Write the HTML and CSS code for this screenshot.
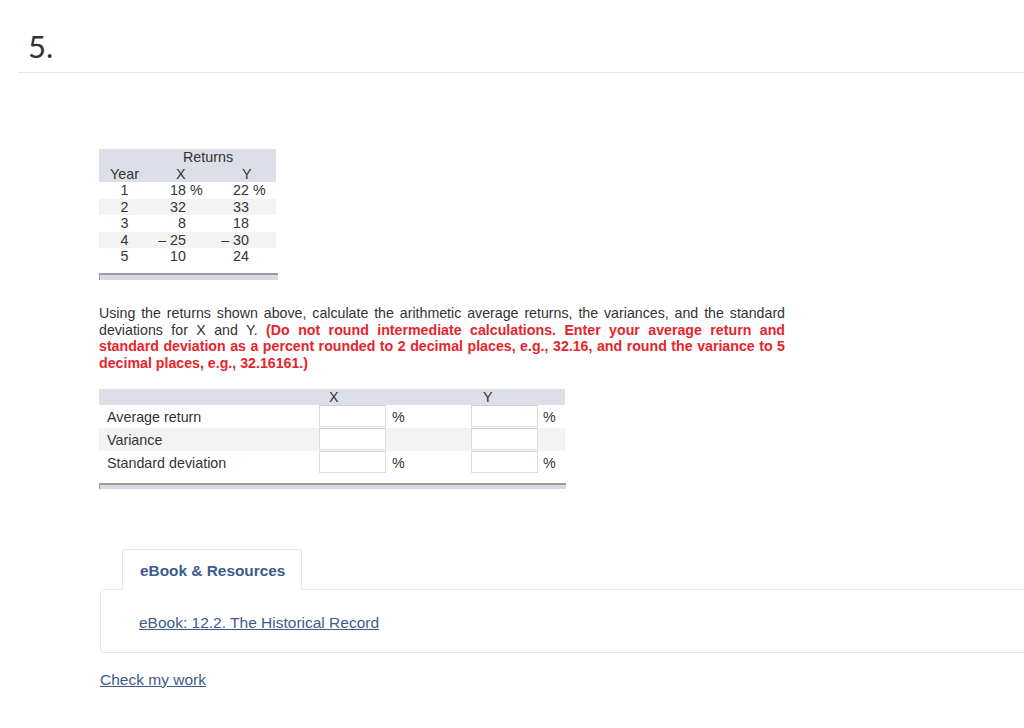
FILE: index.html
```html
<!DOCTYPE html>
<html>
<head>
<meta charset="utf-8">
<link rel="stylesheet" href="styles.css">
</head>
<body>
<header class="qhead"><h1 class="qnum">5.</h1></header>
<main class="content">
  <div class="returns">
    <div class="rrow rhead"><span></span><span class="span-all">Returns</span></div>
    <div class="rrow rhead"><span class="c">Year</span><span class="cx">X</span><span class="cy">Y</span></div>
    <div class="rrow"><span class="c">1</span><span class="n">18</span><span class="p">%</span><span class="n">22</span><span class="p">%</span></div>
    <div class="rrow alt"><span class="c">2</span><span class="n">32</span><span class="p"></span><span class="n">33</span><span class="p"></span></div>
    <div class="rrow"><span class="c">3</span><span class="n">8</span><span class="p"></span><span class="n">18</span><span class="p"></span></div>
    <div class="rrow alt"><span class="c">4</span><span class="n">&ndash; 25</span><span class="p"></span><span class="n">&ndash; 30</span><span class="p"></span></div>
    <div class="rrow"><span class="c">5</span><span class="n">10</span><span class="p"></span><span class="n">24</span><span class="p"></span></div>
  </div>
  <div class="bar bar-returns"></div>

  <p class="prompt"><span class="line">Using the returns shown above, calculate the arithmetic average returns, the variances, and the standard</span>
  <span class="line">deviations for X and Y. <strong class="warn">(Do not round intermediate calculations. Enter your average return and</strong></span>
  <span class="line"><strong class="warn">standard deviation as a percent rounded to 2 decimal places, e.g., 32.16, and round the variance to 5</strong></span>
  <span class="line last"><strong class="warn">decimal places, e.g., 32.16161.)</strong></span></p>

  <div class="answers">
    <div class="arow ahead"><span></span><span class="hx">X</span><span></span><span class="hy">Y</span><span></span></div>
    <div class="arow"><span class="lbl">Average return</span><span class="in"><input type="text"></span><span class="pc">%</span><span class="in"><input type="text"></span><span class="pc2">%</span></div>
    <div class="arow alt"><span class="lbl">Variance</span><span class="in"><input type="text"></span><span class="pc"></span><span class="in"><input type="text"></span><span class="pc2"></span></div>
    <div class="arow"><span class="lbl">Standard deviation</span><span class="in"><input type="text"></span><span class="pc">%</span><span class="in"><input type="text"></span><span class="pc2">%</span></div>
  </div>
  <div class="bar bar-answers"></div>

  <section class="resources">
    <div class="tab">eBook &amp; Resources</div>
    <div class="panel"><a href="#" class="link">eBook: 12.2. The Historical Record</a></div>
  </section>

  <a href="#" class="check link">Check my work</a>
</main>
</body>
</html>
```
FILE: styles.css
```css
* { box-sizing: border-box; }
body {
  margin: 0;
  background: #fff;
  color: #333;
  font-family: "Liberation Sans", Arial, sans-serif;
  font-size: 14px;
}
.qhead {
  margin-left: 18px;
  height: 73px;
  border-bottom: 1px solid #e6e6e6;
  padding: 28px 0 0 10px;
}
.qnum {
  margin: 0;
  font-family: Lato, "Open Sans", sans-serif;
  font-weight: 400;
  font-size: 31px;
  line-height: 36px;
  color: #333;
}
.content {
  margin-left: 99px;
  padding-top: 76px;
}
.returns { width: 177px; font-size: 14.3px; }
.rrow {
  display: grid;
  grid-template-columns: 51px 36px 20px 43px 27px;
  height: 16.5px;
  line-height: 17.5px;
}
.rhead { background: #dcdfe8; }
.alt { background: #f3f3f3; }
.span-all { grid-column: 2 / 6; text-align: left; padding-left: 33px; }
.c { text-align: center; }
.cx { grid-column: 2 / 4; text-align: left; padding-left: 26px; }
.cy { grid-column: 4 / 6; text-align: left; padding-left: 36px; }
.n { text-align: right; white-space: nowrap; }
.p { padding-left: 4px; }
.bar {
  height: 7px;
  background: #d6dae4;
  border-top: 2px solid #9c9c9c;
  border-left: 1px solid #9c9c9c;
}
.bar-returns { width: 179px; margin-top: 8.5px; }
.prompt {
  width: 686px;
  margin: 25px 0 0;
  line-height: 16.7px;
  font-size: 14.2px;
}
.line {
  display: block;
  text-align: justify;
  text-align-last: justify;
  white-space: nowrap;
}
.line.last { text-align: left; text-align-last: left; }
.warn { color: #e8242a; font-weight: 700; }
.answers { width: 466px; margin-top: 17px; }
.arow {
  display: grid;
  grid-template-columns: 220px 67px 85px 67px 27px;
  height: 23px;
  line-height: 25px;
  font-size: 14.3px;
}
.ahead { background: #dcdfe8; height: 16px; line-height: 17px; }
.hx { padding-left: 10px; }
.hy { padding-left: 12px; }
.lbl { padding-left: 8px; }
.in { display: flex; align-items: flex-start; }
.in input {
  width: 67px;
  height: 22px;
  margin: 0;
  border: 1px solid #dcdcdc;
  border-top-color: #cfcfcf;
  background: #fff;
  padding: 0;
}
.pc { padding-left: 6px; }
.pc2 { padding-left: 5px; }
.bar-answers { width: 467px; margin-top: 9px; height: 6px; }
.resources { margin-top: 60px; }
.tab {
  position: relative;
  z-index: 1;
  margin-left: 23px;
  margin-bottom: -1px;
  width: 180px;
  height: 41px;
  padding-left: 17px;
  line-height: 42px;
  background: #fff;
  border: 1px solid #e6e6e6;
  border-bottom: none;
  border-radius: 3px 3px 0 0;
  color: #3d5b8a;
  font-weight: 700;
  font-size: 15.4px;
}
.panel {
  margin-left: 1px;
  margin-right: -10px;
  height: 64px;
  border: 1px solid #e8e8e8;
  border-radius: 4px 0 0 4px;
  padding: 24px 0 0 38px;
}
.link {
  color: #3d5b8a;
  text-decoration: underline;
  font-size: 15.5px;
  line-height: 18px;
}
.check {
  display: inline-block;
  margin-top: 18px;
  margin-left: 1px;
}
```
